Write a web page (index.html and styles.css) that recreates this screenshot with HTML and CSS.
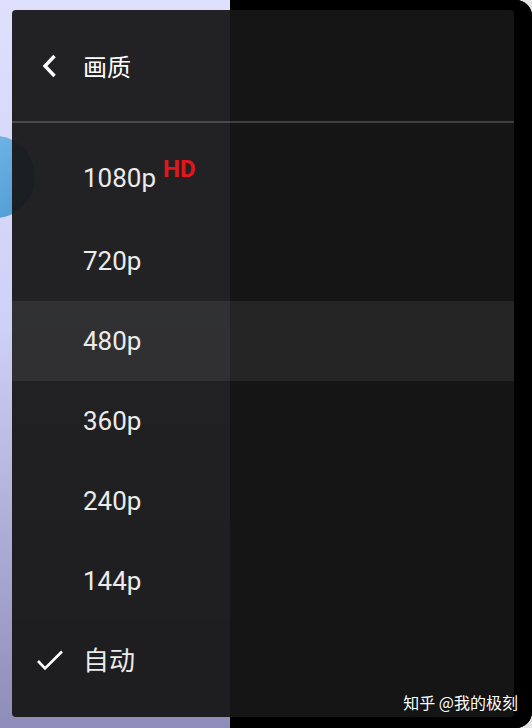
FILE: index.html
```html
<!DOCTYPE html>
<html lang="zh-CN">
<head>
    <meta charset="UTF-8">
    <meta name="viewport" content="width=device-width, initial-scale=1.0">
    <title>画质</title>
    <link rel="stylesheet" href="styles.css">
</head>
<body>
    <div class="screen">
        <div class="video">
            <div class="blob"></div>
        </div>
        <div class="stage"></div>

        <div class="menu">
            <div class="menu-head">
                <span class="icon">
                    <svg width="24" height="24" viewBox="0 0 24 24">
                        <polyline points="16.5,2 7,12 16.5,22" fill="none" stroke="#fff" stroke-width="3.4" stroke-linejoin="miter"/>
                    </svg>
                </span>
                <span class="title">画质</span>
            </div>

            <ul class="menu-list">
                <li class="item first"><span class="icon"></span><span class="label">1080p<sup class="hd">HD</sup></span></li>
                <li class="item"><span class="icon"></span><span class="label">720p</span></li>
                <li class="item active"><span class="icon"></span><span class="label">480p</span></li>
                <li class="item"><span class="icon"></span><span class="label">360p</span></li>
                <li class="item"><span class="icon"></span><span class="label">240p</span></li>
                <li class="item"><span class="icon"></span><span class="label">144p</span></li>
                <li class="item">
                    <span class="icon">
                        <svg width="28" height="24" viewBox="0 0 28 24">
                            <polyline points="2,12 9,19.5 26,2.5" fill="none" stroke="#fff" stroke-width="2.6"/>
                        </svg>
                    </span>
                    <span class="label">自动</span>
                </li>
            </ul>
        </div>

        <div class="watermark">知乎 @我的极刻</div>
    </div>
</body>
</html>
```

FILE: styles.css
```css
body {
    margin: 0;
    background-color: #e4e4e4;
    font-family: Roboto, "Noto Sans CJK SC", sans-serif;
}

.screen {
    position: relative;
    height: 728px;
    display: grid;
    grid-template-columns: 230px 1fr;
    background-color: #000;
    border-radius: 0 16px 16px 0;
    overflow: hidden;
}

.video {
    position: relative;
    overflow: hidden;
    background: linear-gradient(#dfe0fd, #cfd0f6 45%, #8e8cb8);
}

.blob {
    position: absolute;
    left: -45px;
    top: 136px;
    width: 80px;
    height: 82px;
    border-radius: 50%;
    background: linear-gradient(135deg, #7bbde9, #4d98d2);
}

.stage {
    background-color: #000;
}

.menu {
    position: absolute;
    top: 10px;
    left: 12px;
    right: 18px;
    bottom: 11px;
    background-color: rgba(22, 22, 22, 0.94);
    border-radius: 4px;
    color: #ebebeb;
}

.menu-head {
    height: 111px;
    display: flex;
    align-items: center;
    border-bottom: 2px solid rgba(255, 255, 255, 0.18);
    color: #fff;
}

.icon {
    width: 71px;
    flex: none;
    display: flex;
    align-items: center;
    padding-left: 24px;
    box-sizing: border-box;
}

.menu-head .icon {
    padding-left: 26px;
}

.title {
    font-size: 24px;
}

.menu-list {
    list-style: none;
    margin: 0;
    padding: 18px 0 0;
}

.item {
    height: 80px;
    display: flex;
    align-items: center;
}

.item.first .label {
    margin-bottom: 6px;
}

.item.active {
    background-color: rgba(255, 255, 255, 0.07);
}

.label {
    font-size: 26px;
    line-height: 30px;
}

.hd {
    font-size: 24px;
    font-weight: bold;
    color: #e3161d;
    line-height: 0;
    vertical-align: 10px;
    margin-left: 7px;
}

.watermark {
    position: absolute;
    right: 14px;
    bottom: 14px;
    font-family: "Noto Sans CJK SC", sans-serif;
    font-size: 16px;
    color: #fff;
    text-shadow: 0 0 2px rgba(0, 0, 0, 0.6);
}
```
